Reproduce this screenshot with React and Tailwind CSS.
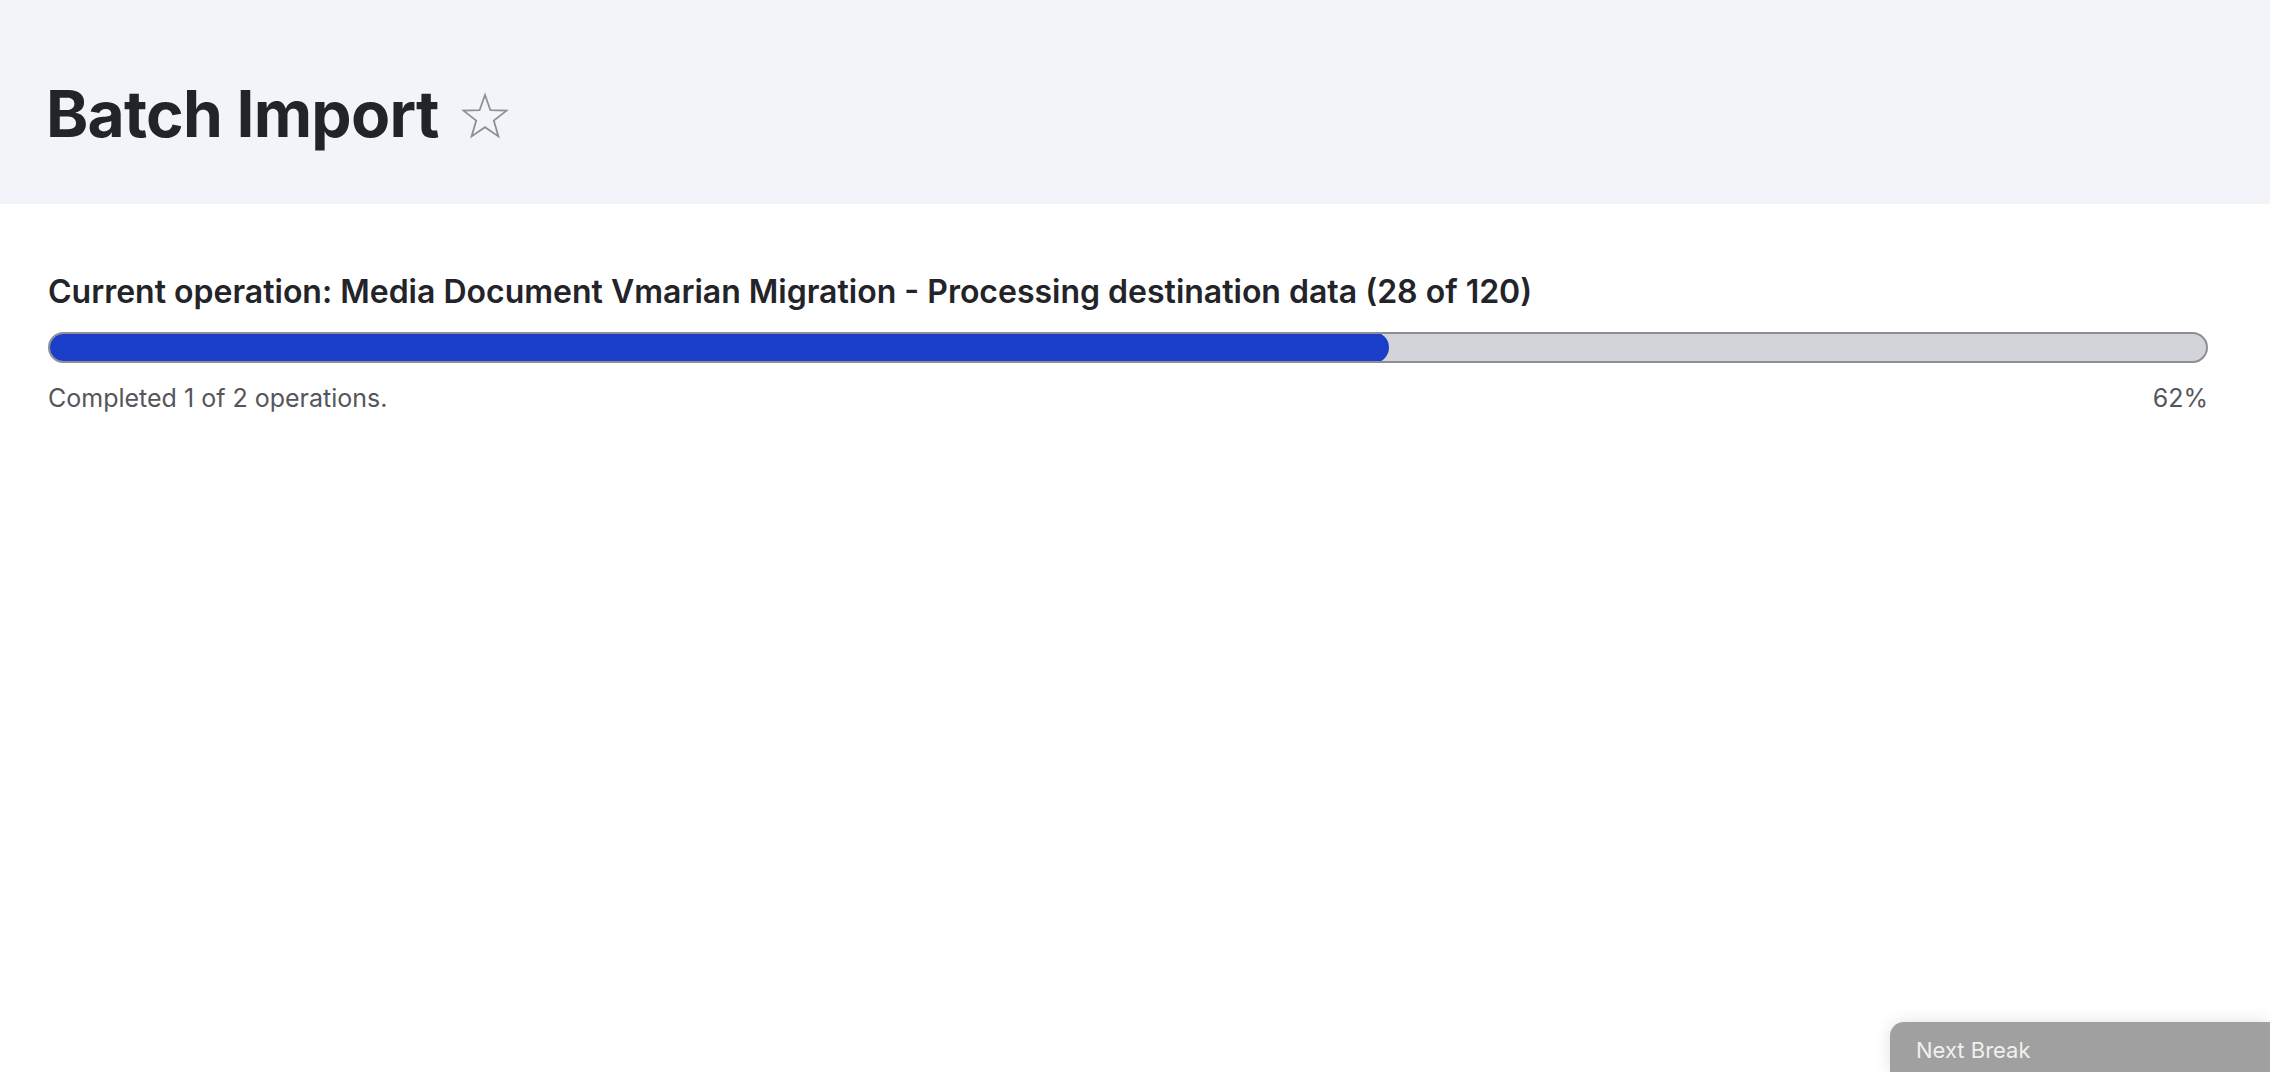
import React from "react";

const progress = 62;

export default function App() {
  return (
    <div className="min-h-screen bg-white text-[#232429] relative overflow-hidden" style={{ fontFamily: "Inter, 'Noto Sans', sans-serif" }}>
      <header className="bg-[#f3f4f9] h-[204px] pl-[46px] pt-[76px]">
        <h1 className="flex items-center text-[64px] font-bold leading-[76px] tracking-[-0.75px]">
          Batch Import
          <svg className="ml-[22px] mt-[4px]" width="48" height="48" viewBox="0 0 24 24" fill="none" stroke="#8e9099" strokeWidth="0.9" strokeLinejoin="miter">
            <polygon points="12,1.5 14.7,9.1 22.8,9.3 16.4,14.3 18.7,22.2 12,17.6 5.3,22.2 7.6,14.3 1.2,9.3 9.3,9.1" />
          </svg>
        </h1>
      </header>

      <main className="pl-[48px] pr-[62px] pt-[68px]">
        <div className="text-[32px] font-semibold leading-[40px]">
          Current operation: Media Document Vmarian Migration - Processing destination data (28 of 120)
        </div>
        <div className="mt-[20px] h-[31px] rounded-full bg-[#d3d4da] border-2 border-[#8e8f95] overflow-hidden">
          <div className="bg-[#1a3ec8] rounded-full -ml-[2px] -mt-[2px] h-[31px]" style={{ width: `calc(${progress}% + 4px)` }} />
        </div>
        <div className="mt-[20px] flex justify-between text-[25px] text-[#55565b] leading-[30px]">
          <span>Completed 1 of 2 operations.</span>
          <span>{progress}%</span>
        </div>
      </main>

      <div className="absolute right-0 bottom-0 w-[380px] h-[50px] bg-[#a0a0a0] rounded-tl-[14px] pl-[26px] pt-[12px] text-[22px] text-[#f0f0f0] shadow-[0_0_16px_rgba(0,0,0,0.12)]">
        Next Break
      </div>
    </div>
  );
}
